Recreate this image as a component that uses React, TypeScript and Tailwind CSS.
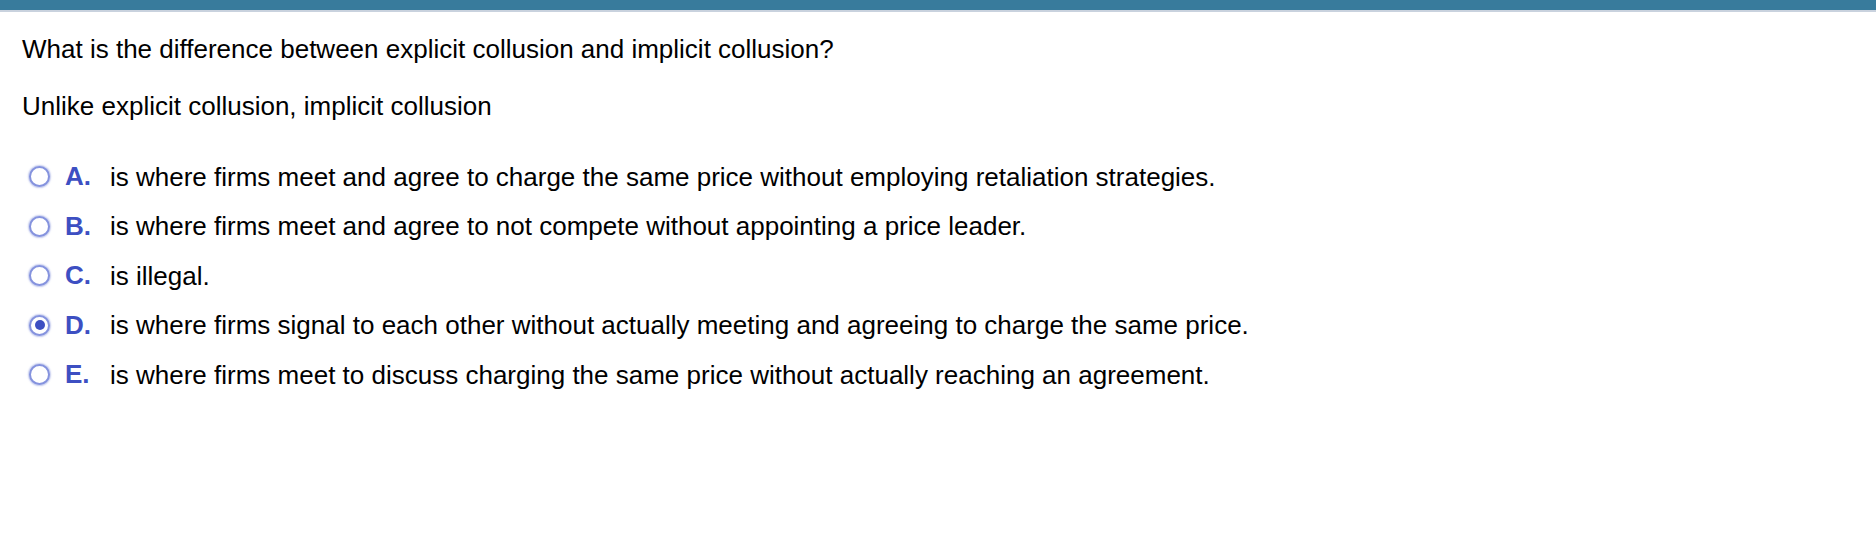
const options = [
  { letter: "A.", text: "is where firms meet and agree to charge the same price without employing retaliation strategies." },
  { letter: "B.", text: "is where firms meet and agree to not compete without appointing a price leader." },
  { letter: "C.", text: "is illegal." },
  { letter: "D.", text: "is where firms signal to each other without actually meeting and agreeing to charge the same price.", checked: true },
  { letter: "E.", text: "is where firms meet to discuss charging the same price without actually reaching an agreement." },
];

function Radio({ checked }: { checked?: boolean }) {
  return (
    <span className="flex h-[21px] w-[21px] shrink-0 items-center justify-center rounded-full border-[2.5px] border-[#8593de] bg-white shadow-[0_0_1.5px_1px_rgba(128,144,220,0.45)]">
      {checked && <span className="h-[10px] w-[10px] rounded-full bg-[#3d4fc2]" />}
    </span>
  );
}

export default function App() {
  return (
    <div className="min-h-[536px] w-full bg-white font-['Liberation_Sans',Arial,sans-serif] text-[26px] text-black">
      {/* Header bar */}
      <div className="h-[10px] bg-[#387b9c]" />
      <div className="h-[2px] bg-[#c9d2de]" />

      <div className="px-[22px] pt-[21.5px]">
        <p className="leading-[30px]">What is the difference between explicit collusion and implicit collusion?</p>
        <p className="mt-[27.5px] leading-[30px]">Unlike explicit collusion, implicit collusion</p>

        <div className="mt-[40.5px] flex flex-col gap-[19.6px]">
          {options.map((o) => (
            <label key={o.letter} className="flex h-[30px] items-center">
              <span className="ml-[7px]">
                <Radio checked={o.checked} />
              </span>
              <span className="ml-[15px] w-[45px] font-bold text-[#3d4fc2]">{o.letter}</span>
              <span className="leading-[30px]">{o.text}</span>
            </label>
          ))}
        </div>
      </div>
    </div>
  );
}
